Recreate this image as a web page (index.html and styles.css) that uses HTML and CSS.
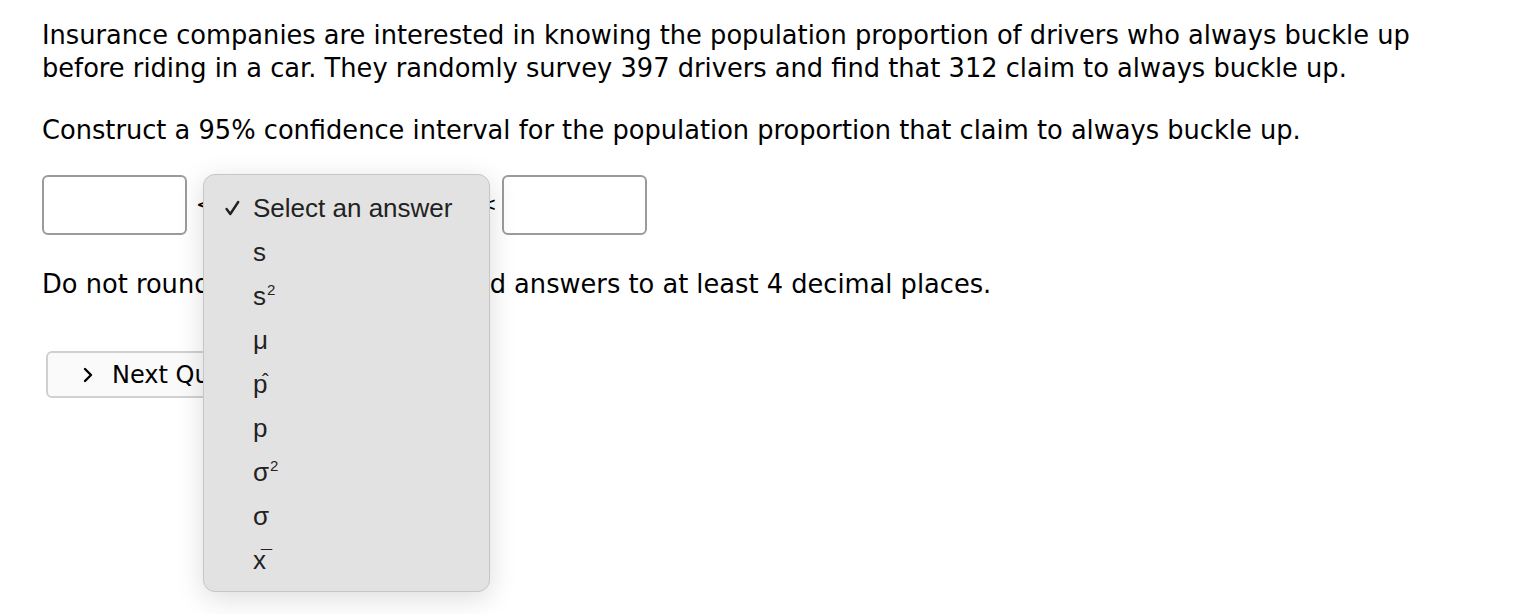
FILE: index.html
```html
<!DOCTYPE html>
<html>
<head>
<meta charset="utf-8">
<link rel="stylesheet" href="styles.css">
</head>
<body>
<div class="page">
  <p class="para first">Insurance companies are interested in knowing the population proportion of drivers who always buckle up before riding in a car. They randomly survey 397 drivers and find that 312 claim to always buckle up.</p>
  <p class="para second">Construct a 95% confidence interval for the population proportion that claim to always buckle up.</p>
  <div class="row">
    <input class="box" type="text">
    <span class="lt lt1">&lt;</span>
    <div class="selwrap">
      <div class="sel">Select an answer</div>
      <div class="menu">
        <div class="item"><svg class="check" width="15" height="17" viewBox="0 0 15 17"><path d="M1.6 9 L5.3 14 L13.2 2" fill="none" stroke="#222" stroke-width="2.4" stroke-linecap="round" stroke-linejoin="round"/></svg>Select an answer</div>
        <div class="item">s</div>
        <div class="item">s<sup class="sq">2</sup></div>
        <div class="item">μ</div>
        <div class="item"><span class="acc">p<span class="hat">ˆ</span></span></div>
        <div class="item">p</div>
        <div class="item">σ<sup class="sq">2</sup></div>
        <div class="item">σ</div>
        <div class="item"><span class="acc">x<span class="bar">¯</span></span></div>
      </div>
    </div>
    <span class="lt lt2">&lt;</span>
    <input class="box" type="text">
  </div>
  <p class="para note">Do not round until you finish. Round answers to at least 4 decimal places.</p>
  <button class="next"><svg class="chev" width="12" height="16" viewBox="0 0 12 16"><path d="M3 2 L9 8 L3 14" fill="none" stroke="#000" stroke-width="2.4" stroke-linecap="round" stroke-linejoin="round"/></svg>Next Question</button>
</div>
</body>
</html>
```
FILE: styles.css
```css
html, body {
  margin: 0;
  padding: 0;
  background: #fff;
  min-height: 614px;
}
.page {
  position: relative;
  min-height: 614px;
  box-sizing: border-box;
  padding: 19px 42px 18px;
  font-family: "DejaVu Sans", sans-serif;
  font-size: 25.7px;
  color: #000;
}
.para {
  margin: 0;
  line-height: 33px;
  width: 1420px;
}
.first {
  margin-bottom: 29px;
}
.second {
  margin-bottom: 28px;
}
.row {
  display: flex;
  align-items: center;
  height: 60px;
}
.box {
  width: 145px;
  height: 60px;
  box-sizing: border-box;
  border: 2px solid #9b9b9b;
  border-radius: 6px;
  margin: 0;
  flex: none;
  background: #fff;
}
.lt {
  display: inline-block;
  font-size: 20px;
  overflow: visible;
  white-space: nowrap;
  flex: none;
  margin-top: -2px;
}
.lt1 {
  width: 16px;
  text-indent: 9px;
}
.lt2 {
  width: 12px;
  text-indent: -10px;
}
.selwrap {
  position: relative;
  width: 287px;
  height: 40px;
  flex: none;
}
.sel {
  font-family: "Liberation Sans", sans-serif;
  font-size: 22px;
  line-height: 40px;
  padding-left: 20px;
}
.menu {
  position: absolute;
  left: 0;
  top: -11px;
  width: 287px;
  height: 418px;
  box-sizing: border-box;
  background: #e2e2e2;
  border: 1px solid #c6c6c6;
  border-radius: 12px;
  box-shadow: 0 6px 28px rgba(0,0,0,0.14);
  padding-top: 11px;
  font-family: "Liberation Sans", sans-serif;
  font-size: 26px;
  color: #222;
}
.item {
  height: 44px;
  line-height: 44px;
  padding-left: 49px;
  position: relative;
}
.check {
  position: absolute;
  left: 21px;
  top: 14px;
}
.sq {
  font-size: 15px;
  vertical-align: 0;
  position: relative;
  top: -10px;
  margin-left: 1px;
}
.acc {
  position: relative;
  display: inline-block;
}
.hat {
  position: absolute;
  left: 9px;
  top: -3px;
  font-size: 20px;
}
.bar {
  position: absolute;
  left: 8px;
  top: -3px;
  font-size: 20px;
}
.note {
  margin-top: 33px;
}
.next {
  display: flex;
  align-items: center;
  margin-top: 50px;
  margin-left: 4px;
  height: 47px;
  width: 250px;
  background: #fafafa;
  border: 2px solid #d0d0d0;
  border-radius: 6px;
  font-family: "DejaVu Sans", sans-serif;
  font-size: 24px;
  padding-left: 34px;
  color: #000;
}
.chev {
  margin-right: 18px;
}
```
